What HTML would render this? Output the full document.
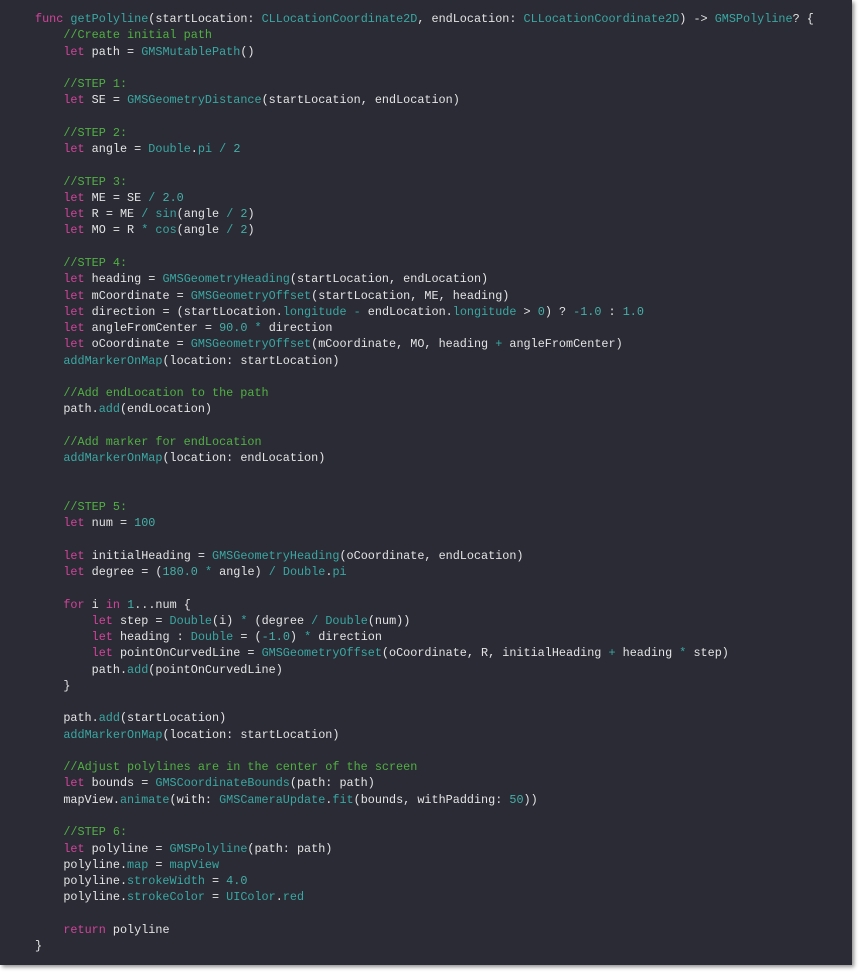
<!DOCTYPE html>
<html><head><meta charset="utf-8"><style>
html,body{margin:0;padding:0;background:#fff;width:860px;height:973px;overflow:hidden}
#p{position:absolute;left:0;top:0;width:852px;height:965px;background:#2a2b35;box-shadow:2px 2px 4px rgba(0,0,0,.45)}
pre{margin:0;position:absolute;left:35px;top:11px;font-family:"Liberation Mono",monospace;font-size:11.8px;line-height:16.27px;color:#e4e4e4}
.k{color:#d2449a}.t{color:#3aa8a2}.c{color:#52b043}.n{color:#46b0a8}
</style></head><body><div id="p"><pre><span class="k">func</span> <span class="t">getPolyline</span>(startLocation: <span class="t">CLLocationCoordinate2D</span>, endLocation: <span class="t">CLLocationCoordinate2D</span>) -&gt; <span class="t">GMSPolyline</span>? {
    <span class="c">//Create initial path</span>
    <span class="k">let</span> path = <span class="t">GMSMutablePath</span>()

    <span class="c">//STEP 1:</span>
    <span class="k">let</span> SE = <span class="t">GMSGeometryDistance</span>(startLocation, endLocation)

    <span class="c">//STEP 2:</span>
    <span class="k">let</span> angle = <span class="t">Double</span>.<span class="t">pi</span> <span class="t">/</span> <span class="n">2</span>

    <span class="c">//STEP 3:</span>
    <span class="k">let</span> ME = SE <span class="t">/</span> <span class="n">2.0</span>
    <span class="k">let</span> R = ME <span class="t">/</span> <span class="t">sin</span>(angle <span class="t">/</span> <span class="n">2</span>)
    <span class="k">let</span> MO = R <span class="t">*</span> <span class="t">cos</span>(angle <span class="t">/</span> <span class="n">2</span>)

    <span class="c">//STEP 4:</span>
    <span class="k">let</span> heading = <span class="t">GMSGeometryHeading</span>(startLocation, endLocation)
    <span class="k">let</span> mCoordinate = <span class="t">GMSGeometryOffset</span>(startLocation, ME, heading)
    <span class="k">let</span> direction = (startLocation.<span class="t">longitude</span> <span class="t">-</span> endLocation.<span class="t">longitude</span> &gt; <span class="n">0</span>) ? <span class="n">-1.0</span> : <span class="n">1.0</span>
    <span class="k">let</span> angleFromCenter = <span class="n">90.0</span> <span class="t">*</span> direction
    <span class="k">let</span> oCoordinate = <span class="t">GMSGeometryOffset</span>(mCoordinate, MO, heading <span class="t">+</span> angleFromCenter)
    <span class="t">addMarkerOnMap</span>(location: startLocation)

    <span class="c">//Add endLocation to the path</span>
    path.<span class="t">add</span>(endLocation)

    <span class="c">//Add marker for endLocation</span>
    <span class="t">addMarkerOnMap</span>(location: endLocation)


    <span class="c">//STEP 5:</span>
    <span class="k">let</span> num = <span class="n">100</span>

    <span class="k">let</span> initialHeading = <span class="t">GMSGeometryHeading</span>(oCoordinate, endLocation)
    <span class="k">let</span> degree = (<span class="n">180.0</span> <span class="t">*</span> angle) <span class="t">/</span> <span class="t">Double</span>.<span class="t">pi</span>

    <span class="k">for</span> i <span class="k">in</span> <span class="n">1</span>...num {
        <span class="k">let</span> step = <span class="t">Double</span>(i) <span class="t">*</span> (degree <span class="t">/</span> <span class="t">Double</span>(num))
        <span class="k">let</span> heading : <span class="t">Double</span> = (<span class="n">-1.0</span>) <span class="t">*</span> direction
        <span class="k">let</span> pointOnCurvedLine = <span class="t">GMSGeometryOffset</span>(oCoordinate, R, initialHeading <span class="t">+</span> heading <span class="t">*</span> step)
        path.<span class="t">add</span>(pointOnCurvedLine)
    }

    path.<span class="t">add</span>(startLocation)
    <span class="t">addMarkerOnMap</span>(location: startLocation)

    <span class="c">//Adjust polylines are in the center of the screen</span>
    <span class="k">let</span> bounds = <span class="t">GMSCoordinateBounds</span>(path: path)
    mapView.<span class="t">animate</span>(with: <span class="t">GMSCameraUpdate</span>.<span class="t">fit</span>(bounds, withPadding: <span class="n">50</span>))

    <span class="c">//STEP 6:</span>
    <span class="k">let</span> polyline = <span class="t">GMSPolyline</span>(path: path)
    polyline.<span class="t">map</span> = <span class="t">mapView</span>
    polyline.<span class="t">strokeWidth</span> = <span class="n">4.0</span>
    polyline.<span class="t">strokeColor</span> = <span class="t">UIColor</span>.<span class="t">red</span>

    <span class="k">return</span> polyline
}</pre></div></body></html>
